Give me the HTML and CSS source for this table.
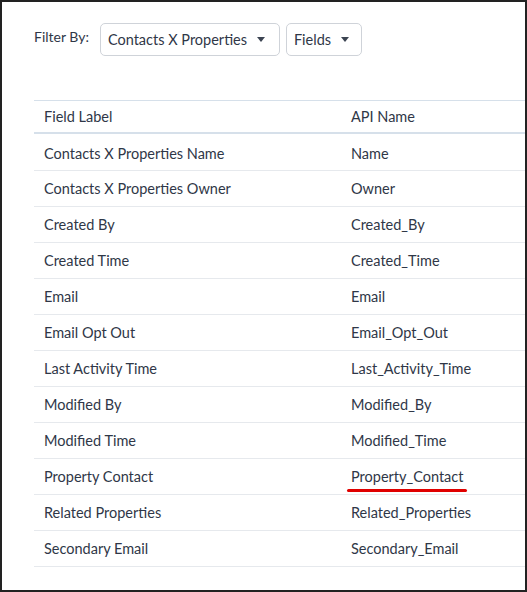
FILE: index.html
```html
<!DOCTYPE html>
<html>
<head>
<meta charset="utf-8">
<link rel="stylesheet" href="styles.css">
</head>
<body>
<div class="frame">
  <div class="filter">
    <span class="filter-label">Filter By:</span>
    <div class="select select-module">Contacts X Properties <span class="caret"></span></div>
    <div class="select select-type">Fields <span class="caret"></span></div>
  </div>
  <table class="fields">
    <thead>
      <tr><th class="col-label">Field Label</th><th>API Name</th></tr>
    </thead>
    <tbody>
      <tr><td>Contacts X Properties Name</td><td>Name</td></tr>
      <tr><td>Contacts X Properties Owner</td><td>Owner</td></tr>
      <tr><td>Created By</td><td>Created_By</td></tr>
      <tr><td>Created Time</td><td>Created_Time</td></tr>
      <tr><td>Email</td><td>Email</td></tr>
      <tr><td>Email Opt Out</td><td>Email_Opt_Out</td></tr>
      <tr><td>Last Activity Time</td><td>Last_Activity_Time</td></tr>
      <tr><td>Modified By</td><td>Modified_By</td></tr>
      <tr><td>Modified Time</td><td>Modified_Time</td></tr>
      <tr><td>Property Contact</td><td><span class="marked">Property_Contact</span></td></tr>
      <tr><td>Related Properties</td><td>Related_Properties</td></tr>
      <tr><td>Secondary Email</td><td>Secondary_Email</td></tr>
    </tbody>
  </table>
</div>
</body>
</html>
```

FILE: styles.css
```css
html, body {
  margin: 0;
  padding: 0;
  background: #fff;
}
.frame {
  width: 527px;
  height: 592px;
  box-sizing: border-box;
  border: 2px solid #222;
  overflow: hidden;
  font-family: "Lato", "Liberation Sans", sans-serif;
  font-size: 14.5px;
  color: #2f3747;
  padding: 21px 0 0 32px;
}
.filter {
  display: flex;
  align-items: flex-start;
  gap: 6px;
}
.filter-label {
  margin-top: 5px;
  margin-right: 5px;
  font-size: 14px;
}
.select {
  height: 33px;
  box-sizing: border-box;
  border: 1px solid #cfd3d9;
  border-radius: 5px;
  display: flex;
  align-items: center;
  padding: 0 7px;
  font-size: 14.5px;
}
.select-module { width: 180px; }
.select-type { width: 76px; }
.caret {
  display: inline-block;
  width: 0;
  height: 0;
  border-left: 4px solid transparent;
  border-right: 4px solid transparent;
  border-top: 5px solid #3c4452;
  margin-left: 10px;
}
.fields {
  margin-top: 44px;
  width: 620px;
  border-collapse: separate;
  border-spacing: 0;
}
.fields th, .fields td {
  text-align: left;
  font-weight: normal;
  padding: 0 10px;
  border-bottom: 1px solid #e6e9ed;
  height: 36px;
  box-sizing: border-box;
}
.fields th {
  height: 33px;
  border-top: 1px solid #d6e0ea;
  border-bottom: 1px solid #d6e0ea;
}
.fields tbody tr:first-child td {
  border-top: 1px solid #d6e0ea;
  height: 38px;
  padding-top: 2px;
}
.col-label {
  width: 307px;
}
.marked {
  position: relative;
}
.marked::after {
  content: "";
  position: absolute;
  left: -4px;
  right: -4px;
  bottom: -7px;
  height: 3px;
  border-radius: 2px;
  background: #e00000;
}
```
